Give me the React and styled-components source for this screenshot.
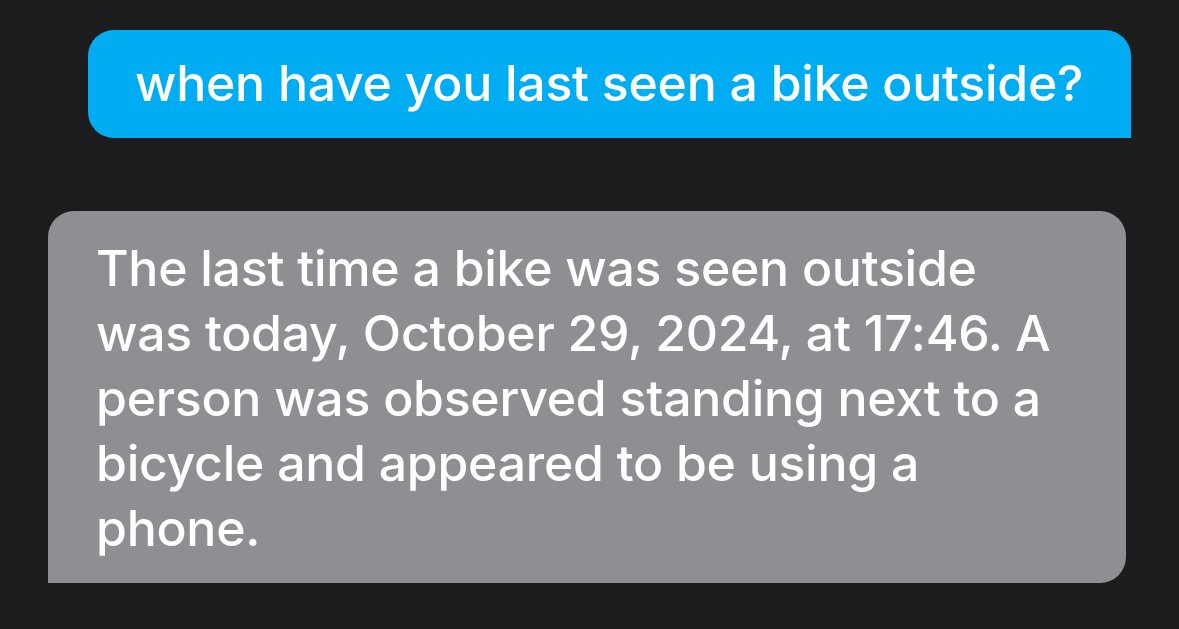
import React from "react";
import styled, { createGlobalStyle } from "styled-components";

const GlobalStyle = createGlobalStyle`
  html, body {
    margin: 0;
    padding: 0;
    background: #1c1c1e;
  }
  body {
    font-family: Inter, "Noto Sans", "Liberation Sans", sans-serif;
    -webkit-font-smoothing: antialiased;
  }
`;

const Thread = styled.div`
  width: 1179px;
  height: 629px;
  box-sizing: border-box;
  padding-top: 30px;
  display: flex;
  flex-direction: column;
  gap: 73px;
`;

const Bubble = styled.div`
  box-sizing: border-box;
  color: #ffffff;
  font-weight: 550;
  font-size: 50px;
  letter-spacing: -0.28px;
  border-radius: 26px;
  ${(p) =>
    p.$sent
      ? `
    margin-left: 88px;
    width: 1043px;
    height: 108px;
    background: #00adf2;
    border-bottom-right-radius: 0;
    display: flex;
    align-items: center;
    padding-left: 47px;
    padding-bottom: 2px;
    line-height: 1;
  `
      : `
    margin-left: 48px;
    width: 1078px;
    height: 372px;
    background: #8e8e93;
    border-bottom-left-radius: 0;
    padding: 25px 30px 0 48px;
    line-height: 65px;
  `}
`;

const Line = styled.span`
  display: block;
  white-space: nowrap;
`;

const reply = [
  "The last time a bike was seen outside",
  "was today, October 29, 2024, at 17:46. A",
  "person was observed standing next to a",
  "bicycle and appeared to be using a",
  "phone.",
];

export default function App() {
  return (
    <>
      <GlobalStyle />
      <Thread>
        <Bubble $sent>when have you last seen a bike outside?</Bubble>
        <Bubble>
          {reply.map((l) => (
            <Line key={l}>{l}</Line>
          ))}
        </Bubble>
      </Thread>
    </>
  );
}
